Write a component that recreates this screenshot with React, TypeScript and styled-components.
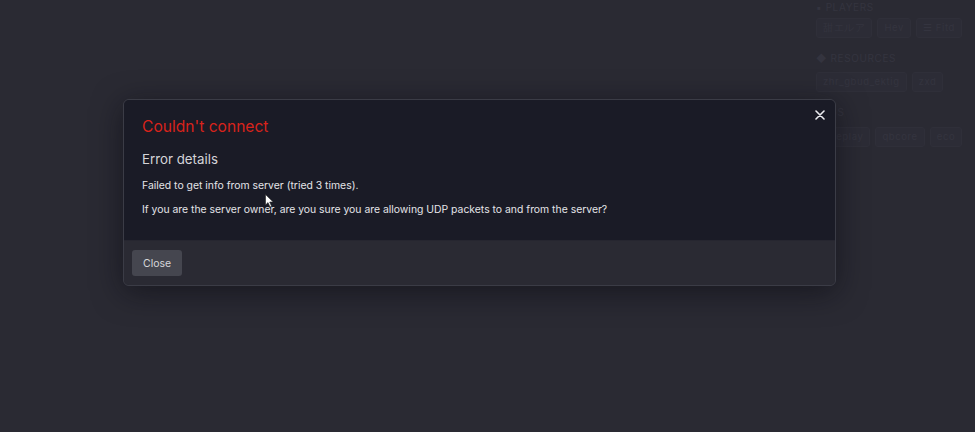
import React from 'react';
import styled, { createGlobalStyle } from 'styled-components';

const GlobalStyle = createGlobalStyle`
  html, body {
    margin: 0;
    padding: 0;
    background: #2a2a33;
  }
  body {
    font-family: Inter, "Noto Sans", sans-serif;
  }
`;

const Page = styled.div`
  position: relative;
  width: 975px;
  height: 432px;
  overflow: hidden;
  background: #2a2a33;
  display: flex;
  justify-content: flex-end;
`;

const Sidebar = styled.aside`
  width: 150px;
  padding: 0 9px 0 16px;
  display: flex;
  flex-direction: column;
  color: #34343f;
  font-size: 10px;
  letter-spacing: 0.6px;
  overflow: hidden;
`;

const SectionTitle = styled.div<{ $mt: number }>`
  text-transform: uppercase;
  margin-top: ${p => p.$mt}px;
  height: 14px;
  line-height: 14px;
`;

const ChipRow = styled.div<{ $mt: number }>`
  display: flex;
  gap: 5px;
  margin-top: ${p => p.$mt}px;
  white-space: nowrap;
`;

const Chip = styled.span`
  background: #2c2c36;
  border: 1px solid #2f2f39;
  border-radius: 3px;
  padding: 3px 6px;
  font-size: 9.5px;
  line-height: 12px;
`;

const Overlay = styled.div`
  position: absolute;
  inset: 0;
  padding: 99px 0 0 123px;
`;

const Modal = styled.div`
  width: 711px;
  border: 1px solid #3b3c46;
  border-radius: 6px;
  overflow: hidden;
  box-shadow: 0 6px 30px rgba(10, 10, 16, 0.55);
  position: relative;
`;

const Body = styled.div`
  background: #1a1b26;
  padding: 15px 18px 22px;
`;

const Title = styled.h2`
  margin: 0;
  color: #d8231b;
  font-size: 15.6px;
  font-weight: 400;
  line-height: 24px;
`;

const Subtitle = styled.h3`
  margin: 10px 0 0;
  color: #d4d4d8;
  font-size: 13.3px;
  font-weight: 400;
  line-height: 20px;
`;

const Text = styled.p<{ $first?: boolean }>`
  margin: ${p => (p.$first ? '9px' : '8px')} 0 0;
  color: #e4e4e8;
  font-size: 10.4px;
  line-height: 16px;
`;

const CloseX = styled.button`
  position: absolute;
  top: 7px;
  right: 7px;
  width: 16px;
  height: 16px;
  padding: 0;
  border: none;
  background: transparent;
  color: #ececf0;
  display: flex;
  align-items: center;
  justify-content: center;
`;

const Footer = styled.div`
  background: #2a2a33;
  border-top: 1px solid #262630;
  padding: 9px 8px;
  display: flex;
`;

const Button = styled.button`
  background: #45464f;
  color: #d6d6da;
  border: none;
  border-radius: 3px;
  height: 26px;
  padding: 0 11px;
  font-family: Inter, "Noto Sans", sans-serif;
  font-size: 10.5px;
`;

const Cursor = styled.svg`
  position: absolute;
  left: 265px;
  top: 194px;
`;

export default function App() {
  return (
    <>
      <GlobalStyle />
      <Page>
        <Sidebar>
          <SectionTitle $mt={0}>▪ Players</SectionTitle>
          <ChipRow $mt={4}>
            <Chip>甜エルア</Chip>
            <Chip>Hev</Chip>
            <Chip>☰ Fitd</Chip>
          </ChipRow>
          <SectionTitle $mt={13}>◆ Resources</SectionTitle>
          <ChipRow $mt={7}>
            <Chip>zhr_gbud_ektig</Chip>
            <Chip>zxd</Chip>
          </ChipRow>
          <SectionTitle $mt={13}>Tags</SectionTitle>
          <ChipRow $mt={8}>
            <Chip>roleplay</Chip>
            <Chip>qbcore</Chip>
            <Chip>eco</Chip>
          </ChipRow>
        </Sidebar>
        <Overlay>
          <Modal>
            <Body>
              <Title>Couldn't connect</Title>
              <Subtitle>Error details</Subtitle>
              <Text $first>Failed to get info from server (tried 3 times).</Text>
              <Text>If you are the server owner, are you sure you are allowing UDP packets to and from the server?</Text>
            </Body>
            <CloseX aria-label="close">
              <svg width="10" height="10" viewBox="0 0 10 10">
                <path d="M1 1 L9 9 M9 1 L1 9" stroke="currentColor" strokeWidth="1.6" strokeLinecap="round" />
              </svg>
            </CloseX>
            <Footer>
              <Button>Close</Button>
            </Footer>
          </Modal>
        </Overlay>
        <Cursor width="10" height="14" viewBox="0 0 10 14">
          <path d="M0.5 0.5 L0.5 11 L3 8.6 L5 13 L6.6 12.3 L4.7 8 L8.2 8 Z" fill="#ffffff" stroke="#222" strokeWidth="0.6" />
        </Cursor>
      </Page>
    </>
  );
}
